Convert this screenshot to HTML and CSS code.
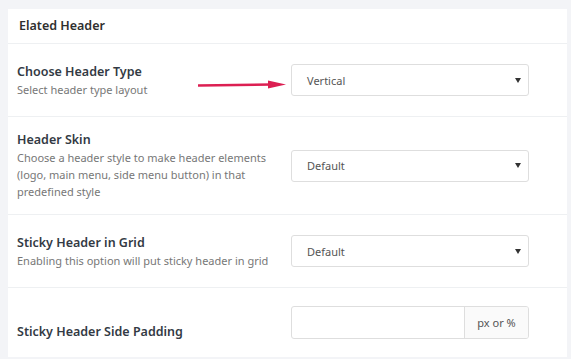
FILE: index.html
```html
<!DOCTYPE html>
<html lang="en">
<head>
  <meta charset="UTF-8">
  <title>Elated Header</title>
  <link rel="stylesheet" href="styles.css">
</head>
<body>
  <div class="panel">
    <div class="panel-head">Elated Header</div>

    <div class="opt-row">
      <div class="opt-info">
        <h4 class="opt-title">Choose Header Type</h4>
        <p class="opt-desc">Select header type layout</p>
      </div>
      <div class="opt-field">
        <svg class="pointer" width="88" height="10" viewBox="0 0 88 10">
          <line x1="0" y1="5.5" x2="74" y2="4.5" stroke="#dc1f52" stroke-width="2.4"/>
          <polygon points="70,0.5 88,4.5 70,8.5" fill="#dc1f52"/>
        </svg>
        <div class="select"><span>Vertical</span><i class="caret"></i></div>
      </div>
    </div>

    <div class="opt-row">
      <div class="opt-info">
        <h4 class="opt-title">Header Skin</h4>
        <p class="opt-desc">Choose a header style to make header elements (logo, main menu, side menu button) in that predefined style</p>
      </div>
      <div class="opt-field">
        <div class="select"><span>Default</span><i class="caret"></i></div>
      </div>
    </div>

    <div class="opt-row">
      <div class="opt-info">
        <h4 class="opt-title">Sticky Header in Grid</h4>
        <p class="opt-desc">Enabling this option will put sticky header in grid</p>
      </div>
      <div class="opt-field">
        <div class="select"><span>Default</span><i class="caret"></i></div>
      </div>
    </div>

    <div class="opt-row last">
      <div class="opt-info">
        <h4 class="opt-title low">Sticky Header Side Padding</h4>
      </div>
      <div class="opt-field">
        <div class="input-group">
          <div class="input"></div>
          <div class="addon">px or %</div>
        </div>
      </div>
    </div>
  </div>
</body>
</html>
```

FILE: styles.css
```css
body {
  margin: 0;
  padding: 9px 4px 0 8px;
  background-color: #f3f4f7;
  font-family: 'Noto Sans', 'Open Sans', sans-serif;
  color: #333;
  overflow: hidden;
}
.panel {
  width: 559px;
  background-color: #fff;
}
.panel-head {
  height: 34px;
  line-height: 34px;
  padding-left: 11px;
  font-size: 12.5px;
  font-weight: 600;
  color: #2f2f2f;
  border-bottom: 1px solid #eef0f2;
}
.opt-row {
  display: flex;
  align-items: center;
  box-sizing: border-box;
  min-height: 73px;
  padding: 14px 38px 14px 9px;
  border-bottom: 1px solid #eef0f2;
}
.opt-row.last { border-bottom: none; height: 69px; min-height: 0; }
.opt-info { flex: 1; }
.opt-title {
  margin: 0;
  font-size: 12.5px;
  font-weight: 600;
  color: #333a44;
  line-height: 18px;
}
.opt-title.low { margin-top: 18px; }
.opt-desc {
  margin: 0;
  font-size: 11px;
  color: #777;
  line-height: 17px;
  max-width: 262px;
}
.opt-field {
  position: relative;
  width: 238px;
}
.pointer { position: absolute; left: -93px; top: 16px; }
.select {
  height: 30px;
  border: 1px solid #dedede;
  border-radius: 3px;
  display: flex;
  align-items: center;
  justify-content: space-between;
  padding: 0 7px 0 15px;
  font-size: 11px;
  color: #555;
}
.caret {
  width: 0;
  height: 0;
  border-left: 3px solid transparent;
  border-right: 3px solid transparent;
  border-top: 5px solid #333;
}
.input-group {
  display: flex;
  height: 31px;
  border: 1px solid #dedede;
  border-radius: 3px;
  overflow: hidden;
}
.input { flex: 1; }
.addon {
  width: 63px;
  border-left: 1px solid #dedede;
  background-color: #fafafa;
  font-size: 11px;
  color: #555;
  display: flex;
  align-items: center;
  justify-content: center;
}
```
